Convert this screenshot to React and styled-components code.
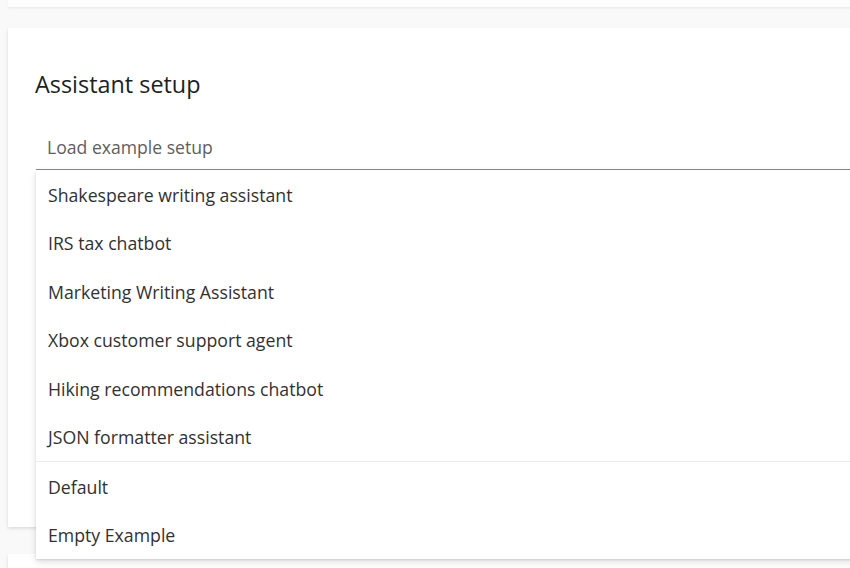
import React from 'react';
import styled, { createGlobalStyle } from 'styled-components';

const GlobalStyle = createGlobalStyle`
    html, body {
        margin: 0;
        padding: 0;
        background: #f9f9f9;
        overflow: hidden;
        font-family: "Open Sans", "Noto Sans", Arial, sans-serif;
    }
`;

const examples = [
    'Shakespeare writing assistant',
    'IRS tax chatbot',
    'Marketing Writing Assistant',
    'Xbox customer support agent',
    'Hiking recommendations chatbot',
    'JSON formatter assistant',
];

const extras = ['Default', 'Empty Example'];

const App = () => {
    return <Page>
        <GlobalStyle />
        <PrevCard />
        <Card>
            <Title>Assistant setup</Title>
            <Field>
                <Placeholder>Load example setup</Placeholder>
                <Listbox>
                    <Group>
                        {examples.map((name) => <Option key={name}>{name}</Option>)}
                    </Group>
                    <Group divided>
                        {extras.map((name) => <Option key={name}>{name}</Option>)}
                    </Group>
                </Listbox>
            </Field>
        </Card>
        <NextCard />
    </Page>
};

export default App;

const Page = styled.div`
    width: 850px;
    height: 568px;
    padding-left: 8px;
    box-sizing: border-box;
    display: flex;
    flex-direction: column;
    overflow: hidden;
`;

const PrevCard = styled.div`
    width: 900px;
    height: 7px;
    flex-shrink: 0;
    background: #fdfdfd;
    border-bottom: 1px solid #eeeeee;
    box-shadow: 0 1px 2px rgba(0, 0, 0, 0.04);
`;

const Card = styled.div`
    width: 900px;
    height: 499px;
    flex-shrink: 0;
    margin-top: 20px;
    box-sizing: border-box;
    padding: 40px 0 0 27px;
    background: #ffffff;
    box-shadow: 0 1.6px 3.6px rgba(0, 0, 0, 0.13), 0 0.3px 0.9px rgba(0, 0, 0, 0.11);
    position: relative;
    z-index: 1;
`;

const NextCard = styled.div`
    width: 900px;
    height: 60px;
    flex-shrink: 0;
    margin-top: 27px;
    background: #ffffff;
    box-shadow: 0 1.6px 3.6px rgba(0, 0, 0, 0.13), 0 0.3px 0.9px rgba(0, 0, 0, 0.11);
`;

const Title = styled.h2`
    margin: 0;
    font-size: 23.4px;
    line-height: 32px;
    font-weight: 400;
    color: #201f1e;
`;

const Field = styled.div`
    position: relative;
    margin-top: 29px;
    margin-left: 1px;
    height: 41px;
    border-bottom: 1px solid #8a8886;
    display: flex;
    align-items: center;
    padding-left: 11px;
    padding-bottom: 4px;
    box-sizing: border-box;
`;

const Placeholder = styled.span`
    font-size: 17.6px;
    color: #605e5c;
`;

const Listbox = styled.div`
    position: absolute;
    top: 100%;
    left: 0;
    right: 0;
    margin-top: 1px;
    background: #ffffff;
    box-shadow: 0 3.2px 7.2px rgba(0, 0, 0, 0.13), 0 0.6px 1.8px rgba(0, 0, 0, 0.11);
`;

const Group = styled.div`
    display: flex;
    flex-direction: column;
    border-top: ${(props) => (props.divided ? '1px solid #edebe9' : 'none')};
`;

const Option = styled.div`
    height: 48.5px;
    display: flex;
    align-items: center;
    padding: 1px 0 0 12px;
    box-sizing: border-box;
    font-size: 17.7px;
    color: #323130;
`;
